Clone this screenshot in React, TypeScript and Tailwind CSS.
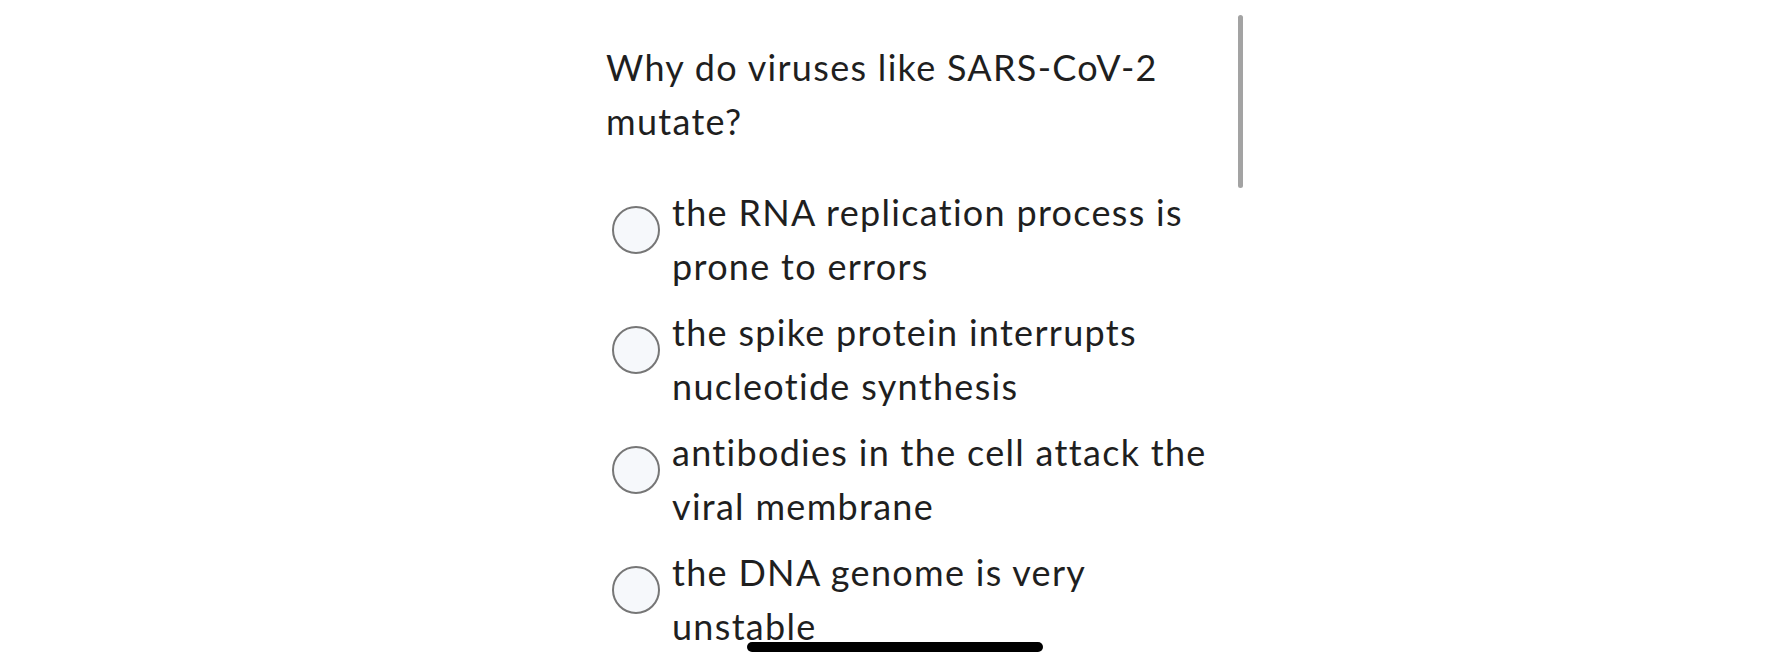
const options = [
  'the RNA replication process is prone to errors',
  'the spike protein interrupts nucleotide synthesis',
  'antibodies in the cell attack the viral membrane',
  'the DNA genome is very unstable',
];

function Radio() {
  return (
    <span className="mt-[21px] h-[48px] w-[48px] shrink-0 rounded-full border-2 border-[#767676] bg-[#f6f8fb]" />
  );
}

export default function App() {
  return (
    <div
      className="relative h-[668px] w-full overflow-hidden bg-white text-[#1f1f1f] tracking-[1.3px] [font-variant-ligatures:none]"
      style={{ fontFamily: 'Lato, "Noto Sans", sans-serif' }}
    >
      <div className="ml-[606px] w-[614px] pt-[40px]">
        <h2 className="text-[36px] font-normal leading-[54px]">
          Why do viruses like SARS-CoV-2 mutate?
        </h2>
        <ul className="mt-[37px] flex flex-col gap-[12px]">
          {options.map((opt) => (
            <li key={opt} className="flex items-start">
              <div className="ml-[6px] flex w-[60px] shrink-0">
                <Radio />
              </div>
              <span className="text-[36px] leading-[54px]">{opt}</span>
            </li>
          ))}
        </ul>
      </div>

      {/* scroll indicator */}
      <div className="absolute left-[1238px] top-[15px] h-[173px] w-[5px] rounded-full bg-[#a3a3a3]" />

      {/* home indicator */}
      <div className="absolute bottom-[16px] left-[747px] h-[10px] w-[296px] rounded-full bg-black" />
    </div>
  );
}
